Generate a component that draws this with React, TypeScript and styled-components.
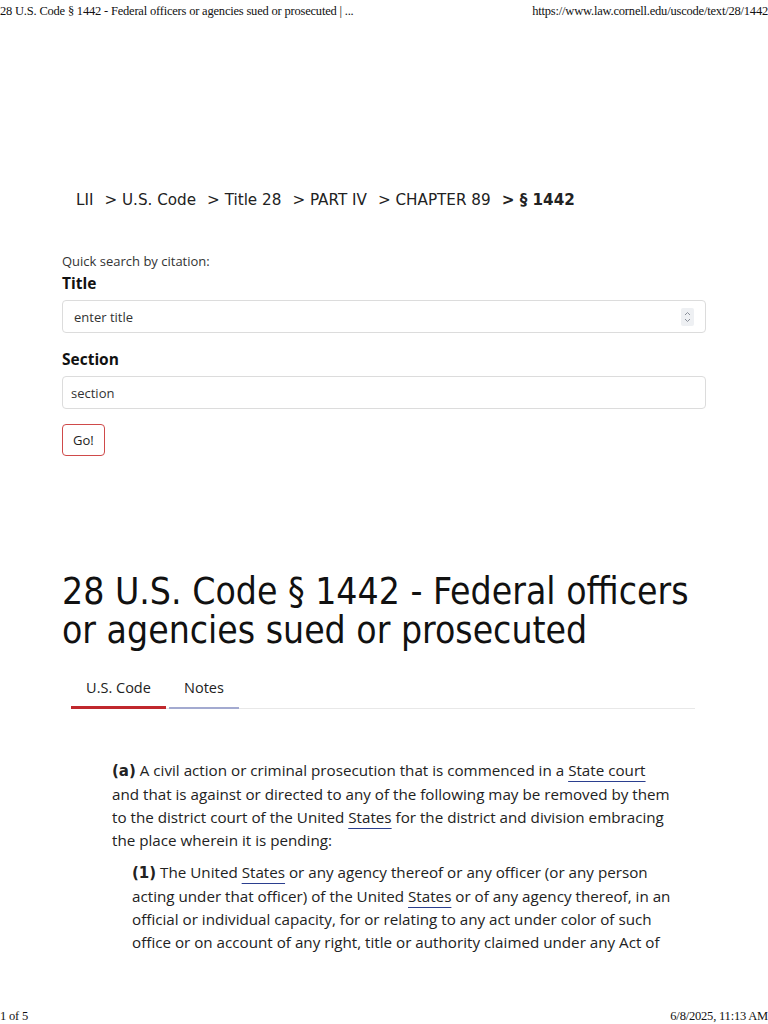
import React from "react";
import styled, { createGlobalStyle } from "styled-components";

const Global = createGlobalStyle`
  html, body { margin: 0; padding: 0; background: #fff; }
  body { width: 768px; height: 1024px; overflow: hidden; }
`;

const Page = styled.div`
  width: 768px;
  height: 1024px;
  display: flex;
  flex-direction: column;
  color: #1a1a1a;
  font-family: "Open Sans", sans-serif;
`;

const PrintBar = styled.div<{ $foot?: boolean }>`
  display: flex;
  justify-content: space-between;
  align-items: ${(p) => (p.$foot ? "flex-end" : "flex-start")};
  height: 22px;
  padding: ${(p) => (p.$foot ? "0 0 0 0" : "3px 0 0 0")};
  line-height: 16px;
  font-family: "Liberation Serif", serif;
  font-size: 12.5px;
  color: #111;
  letter-spacing: -0.2px;
`;

const Body = styled.div`
  flex: 1;
  padding: 0 62px;
`;

const Crumbs = styled.nav`
  margin-top: 166px;
  padding-left: 14px;
  display: flex;
  gap: 11px;
  font-family: "DejaVu Sans", sans-serif;
  font-size: 15.2px;
  color: #222;
`;

const Crumb = styled.span<{ $current?: boolean }>`
  font-weight: ${(p) => (p.$current ? 700 : 400)};
`;

const Search = styled.form`
  margin-top: 43px;
  display: flex;
  flex-direction: column;
  align-items: flex-start;
`;

const Hint = styled.div`
  font-size: 13px;
  color: #333;
  line-height: 18px;
`;

const Label = styled.label`
  font-weight: 700;
  font-size: 15.5px;
  line-height: 22px;
  color: #111;
  margin-top: 2px;
`;

const Field = styled.div<{ $gap?: number; $pad?: number }>`
  width: 644px;
  height: 33px;
  box-sizing: border-box;
  margin-top: 6px;
  margin-bottom: ${(p) => p.$gap ?? 0}px;
  border: 1px solid #dcdcdc;
  border-radius: 4px;
  display: flex;
  align-items: center;
  justify-content: space-between;
  padding: 0 11px 0 ${(p) => p.$pad ?? 11}px;
  font-size: 13px;
  color: #333;
`;

const Spin = styled.span`
  width: 13px;
  height: 18px;
  background: #eef0f3;
  border-radius: 2px;
  display: flex;
  align-items: center;
  justify-content: center;
`;

const GoButton = styled.button`
  margin-top: 15px;
  height: 32px;
  padding: 0 10px;
  border: 1px solid #cf4a4a;
  border-radius: 4px;
  background: #fff;
  font-family: "Open Sans", sans-serif;
  font-size: 13px;
  color: #222;
`;

const Heading = styled.h1`
  margin: 116px 0 0 0;
  font-family: "DejaVu Sans Condensed", "DejaVu Sans", sans-serif;
  font-weight: 400;
  font-size: 37px;
  line-height: 39px;
  color: #111;
`;

const Tabs = styled.div`
  margin: 28px 11px 0 9px;
  display: flex;
  border-bottom: 1px solid #e8e8e8;
`;

const Tab = styled.div<{ $accent: string; $w: number; $thick: number }>`
  width: ${(p) => p.$w}px;
  box-sizing: border-box;
  text-align: center;
  font-size: 14.5px;
  color: #222;
  padding-bottom: 9px;
  margin-right: 3px;
  border-bottom: ${(p) => p.$thick}px solid ${(p) => p.$accent};
  margin-bottom: -1px;
`;

const Statute = styled.div`
  margin: 50px 34px 0 50px;
  font-size: 15.2px;
  line-height: 23px;
  color: #222;
`;

const Para = styled.p<{ $indent?: number }>`
  margin: 0 0 9px ${(p) => p.$indent ?? 0}px;
`;

const Mark = styled.b`
  font-family: "DejaVu Sans", sans-serif;
  font-size: 15px;
`;

const Term = styled.span`
  text-decoration: underline;
  text-decoration-color: #2b3f8f;
  text-underline-offset: 5px;
  text-decoration-thickness: 1px;
`;

export default function App() {
  return (
    <Page>
      <Global />
      <PrintBar>
        <span>28 U.S. Code § 1442 - Federal officers or agencies sued or prosecuted | ...</span>
        <span>https://www.law.cornell.edu/uscode/text/28/1442</span>
      </PrintBar>
      <Body>
        <Crumbs>
          <Crumb>LII</Crumb>
          <Crumb>&gt; U.S. Code</Crumb>
          <Crumb>&gt; Title 28</Crumb>
          <Crumb>&gt; PART IV</Crumb>
          <Crumb>&gt; CHAPTER 89</Crumb>
          <Crumb $current>&gt; § 1442</Crumb>
        </Crumbs>
        <Search onSubmit={(e) => e.preventDefault()}>
          <Hint>Quick search by citation:</Hint>
          <Label>Title</Label>
          <Field $gap={13}>
            <span>enter title</span>
            <Spin>
              <svg width="9" height="14" viewBox="0 0 9 14" fill="none" stroke="#8a8f99" strokeWidth="1">
                <path d="M2 5 L4.5 2.5 L7 5" />
                <path d="M2 9 L4.5 11.5 L7 9" />
              </svg>
            </Spin>
          </Field>
          <Label>Section</Label>
          <Field $pad={8}>
            <span>section</span>
          </Field>
          <GoButton type="submit">Go!</GoButton>
        </Search>
        <Heading>
          28 U.S. Code § 1442 - Federal officers or agencies sued or prosecuted
        </Heading>
        <Tabs>
          <Tab $accent="#c0282d" $w={95} $thick={3}>U.S. Code</Tab>
          <Tab $accent="#a3aad0" $w={70} $thick={2}>Notes</Tab>
        </Tabs>
        <Statute>
          <Para>
            <Mark>(a)</Mark> A civil action or criminal prosecution that is commenced in a{" "}
            <Term>State court</Term> and that is against or directed to any of the following may be
            removed by them to the district court of the United <Term>States</Term> for the district
            and division embracing the place wherein it is pending:
          </Para>
          <Para $indent={20}>
            <Mark>(1)</Mark> The United <Term>States</Term> or any agency thereof or any officer (or
            any person acting under that officer) of the United <Term>States</Term> or of any agency
            thereof, in an official or individual capacity, for or relating to any act under color of
            such office or on account of any right, title or authority claimed under any Act of
          </Para>
        </Statute>
      </Body>
      <PrintBar $foot>
        <span>1 of 5</span>
        <span>6/8/2025, 11:13 AM</span>
      </PrintBar>
    </Page>
  );
}
